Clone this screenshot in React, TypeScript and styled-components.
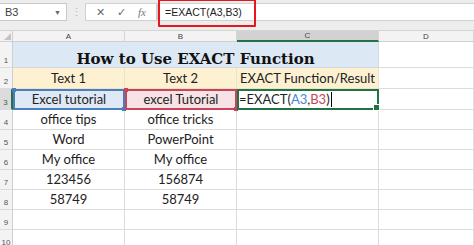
import React from "react";
import styled, { createGlobalStyle, css } from "styled-components";

const Global = createGlobalStyle`
  html, body { margin: 0; padding: 0; background: #ffffff; overflow: hidden; }
  * { box-sizing: border-box; }
`;

const Page = styled.div`
  width: 474px;
  height: 245px;
  overflow: hidden;
  position: relative;
  background: #ffffff;
  font-family: "Liberation Sans", Arial, sans-serif;
`;

const FormulaBar = styled.div`
  height: 31px;
  background: #ededed;
  display: flex;
  align-items: flex-start;
  padding-top: 3px;
  border-bottom: 1px solid #d4d4d4;
`;

const NameBox = styled.div`
  width: 67px;
  height: 18px;
  background: #fff;
  border: 1px solid #c9c9c9;
  border-left: none;
  display: flex;
  align-items: center;
  justify-content: space-between;
  padding: 0 5px 0 5px;
  font-size: 11px;
  color: #404040;
`;

const Arrow = styled.span`
  font-size: 7px;
  color: #666;
`;

const Sep = styled.div`
  width: 18px;
  height: 18px;
  display: flex;
  align-items: center;
  justify-content: center;
  color: #b5b5b5;
  font-size: 11px;
`;

const FxBox = styled.div`
  width: 72px;
  height: 18px;
  background: #fff;
  border: 1px solid #d0d0d0;
  display: flex;
  align-items: center;
  justify-content: space-around;
  padding: 0 4px;
  color: #6a6a6a;
  font-size: 11px;
`;

const Fx = styled.span`
  font-family: "Liberation Serif", serif;
  font-style: italic;
  font-size: 11px;
  color: #777;
`;

const FormulaInput = styled.div`
  flex: 1;
  height: 18px;
  background: #fff;
  border: 1px solid #d0d0d0;
  border-right: none;
  display: flex;
  align-items: center;
  padding-left: 7px;
  font-size: 10.5px;
  color: #222;
`;

const Highlight = styled.div`
  position: absolute;
  left: 158px;
  top: -1px;
  width: 98px;
  height: 28px;
  border: 2px solid #e5171d;
  border-radius: 1px;
`;

const Sheet = styled.div`
  display: grid;
  grid-template-columns: 13px 112px 112px 142px 95px;
  grid-template-rows: 11px 26px 21px 21px repeat(7, 20px);
  font-family: Lato, "Open Sans", sans-serif;
`;

const Corner = styled.div`
  background: #f3f3f3;
  border-right: 1px solid #cfcfcf;
  border-bottom: 1px solid #cfcfcf;
  position: relative;
  &::after {
    content: "";
    position: absolute;
    right: 1px;
    bottom: 1px;
    width: 0;
    height: 0;
    border-left: 7px solid transparent;
    border-bottom: 7px solid #c4c4c4;
  }
`;

const ColHeader = styled.div<{ $selected?: boolean }>`
  background: ${(p) => (p.$selected ? "#d2d2d2" : "#f3f3f3")};
  border-right: 1px solid #d6d6d6;
  border-bottom: ${(p) => (p.$selected ? "2px solid #217346" : "1px solid #cfcfcf")};
  display: flex;
  align-items: center;
  justify-content: center;
  font-family: "Liberation Sans", Arial, sans-serif;
  font-size: 8px;
  color: #444;
`;

const RowHeader = styled.div<{ $selected?: boolean }>`
  background: ${(p) => (p.$selected ? "#dcdcdc" : "#f3f3f3")};
  border-right: ${(p) => (p.$selected ? "2px solid #217346" : "1px solid #cfcfcf")};
  border-bottom: 1px solid #dcdcdc;
  display: flex;
  align-items: flex-end;
  justify-content: center;
  padding-bottom: 2px;
  font-family: "Liberation Sans", Arial, sans-serif;
  font-size: 8px;
  color: #555;
`;

const Cell = styled.div<{ $bg?: string; $line?: string }>`
  background: ${(p) => p.$bg || "#ffffff"};
  border-right: 1px solid ${(p) => p.$line || "#dcdcdc"};
  border-bottom: 1px solid ${(p) => p.$line || "#dcdcdc"};
  display: flex;
  align-items: flex-end;
  justify-content: center;
  padding-bottom: 2px;
  font-size: 13px;
  color: #222;
  white-space: nowrap;
  overflow: hidden;
`;

const TitleCell = styled(Cell)`
  grid-column: 2 / span 3;
  font-family: "DejaVu Serif", "Liberation Serif", serif;
  font-weight: bold;
  font-size: 15px;
  color: #111;
  padding-bottom: 0;
  line-height: 1;
  border-right: 1px solid #cfd9e6;
  border-bottom: 1px solid #cfd9e6;
`;

const rangeStyles = css<{ $color: string }>`
  position: relative;
  border: 2px solid ${(p) => p.$color};
  padding-bottom: 1px;
  overflow: visible;
  &::before,
  &::after {
    content: "";
    position: absolute;
    width: 4px;
    height: 4px;
    background: ${(p) => p.$color};
  }
  &::before { left: -3px; top: -3px; }
  &::after { right: -3px; bottom: -3px; }
`;

const RangeCell = styled(Cell)<{ $color: string }>`
  ${rangeStyles}
`;

const ActiveCell = styled(Cell)`
  position: relative;
  border: 2px solid #217346;
  justify-content: flex-start;
  padding-left: 0;
  padding-bottom: 1px;
  overflow: visible;
  &::after {
    content: "";
    position: absolute;
    right: -3px;
    bottom: -3px;
    width: 5px;
    height: 5px;
    background: #217346;
    border: 1px solid #fff;
  }
`;

const Ref = styled.span<{ $color: string }>`
  color: ${(p) => p.$color};
`;

const Caret = styled.span`
  display: inline-block;
  width: 1px;
  height: 15px;
  background: #000;
  margin-left: 1px;
  align-self: flex-end;
  margin-bottom: 0px;
`;

const rows: [string, string][] = [
  ["office tips", "office tricks"],
  ["Word", "PowerPoint"],
  ["My office", "My office"],
  ["123456", "156874"],
  ["58749", "58749"],
  ["", ""],
  ["", ""],
];

export default function App() {
  return (
    <Page>
      <Global />
      <FormulaBar>
        <NameBox>
          <span>B3</span>
          <Arrow>▼</Arrow>
        </NameBox>
        <Sep>⋮</Sep>
        <FxBox>
          <span>✕</span>
          <span>✓</span>
          <Fx>fx</Fx>
        </FxBox>
        <FormulaInput>=EXACT(A3,B3)</FormulaInput>
      </FormulaBar>
      <Highlight />
      <Sheet>
        <Corner />
        <ColHeader>A</ColHeader>
        <ColHeader>B</ColHeader>
        <ColHeader $selected>C</ColHeader>
        <ColHeader>D</ColHeader>

        <RowHeader>1</RowHeader>
        <TitleCell $bg="#dde8f5">How to Use EXACT Function</TitleCell>
        <Cell />

        <RowHeader>2</RowHeader>
        <Cell $bg="#fdf1d2" $line="#ede3c4">Text 1</Cell>
        <Cell $bg="#fdf1d2" $line="#ede3c4">Text 2</Cell>
        <Cell $bg="#fdf1d2" $line="#ede3c4">EXACT Function/Result</Cell>
        <Cell />

        <RowHeader $selected>3</RowHeader>
        <RangeCell $bg="#dfe9f6" $color="#4a7ebb">Excel tutorial</RangeCell>
        <RangeCell $bg="#f7e3e5" $color="#c8445a">excel Tutorial</RangeCell>
        <ActiveCell>
          =EXACT(<Ref $color="#4a86d0">A3</Ref>,<Ref $color="#c8445a">B3</Ref>)
          <Caret />
        </ActiveCell>
        <Cell />

        {rows.map(([a, b], i) => (
          <React.Fragment key={i}>
            <RowHeader>{i + 4}</RowHeader>
            <Cell>{a}</Cell>
            <Cell>{b}</Cell>
            <Cell />
            <Cell />
          </React.Fragment>
        ))}
      </Sheet>
    </Page>
  );
}
